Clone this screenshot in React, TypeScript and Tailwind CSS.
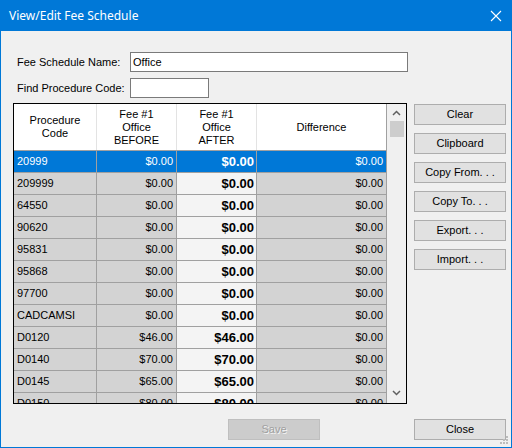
import React from "react";

const rows: [string, string][] = [
  ["20999", "$0.00"],
  ["209999", "$0.00"],
  ["64550", "$0.00"],
  ["90620", "$0.00"],
  ["95831", "$0.00"],
  ["95868", "$0.00"],
  ["97700", "$0.00"],
  ["CADCAMSI", "$0.00"],
  ["D0120", "$46.00"],
  ["D0140", "$70.00"],
  ["D0145", "$65.00"],
  ["D0150", "$80.00"],
];

const buttons = ["Clear", "Clipboard", "Copy From. . .", "Copy To. . .", "Export. . .", "Import. . ."];

function Btn({ label }: { label: string }) {
  return (
    <div className="w-[92px] h-[21px] bg-[#e1e1e1] border border-[#adadad] flex items-center justify-center text-[11px] text-black">
      {label}
    </div>
  );
}

export default function App() {
  return (
    <div
      className="relative w-[512px] h-[448px] bg-[#f0f0f0] flex flex-col border-x border-b border-[#0078d7] text-[11px] text-black overflow-hidden"
      style={{ fontFamily: '"Liberation Sans", Arial, sans-serif' }}
    >
      {/* title bar */}
      <div className="h-[31px] bg-[#0078d7] flex items-center justify-between pl-[8px] pr-[9px] shrink-0">
        <span className="text-white text-[12px]" style={{ fontFamily: '"Noto Sans", sans-serif' }}>
          View/Edit Fee Schedule
        </span>
        <svg width="12" height="12" viewBox="0 0 12 12">
          <path d="M1 1 L11 11 M11 1 L1 11" stroke="#ffffff" strokeWidth="1.1" fill="none" />
        </svg>
      </div>

      <div className="flex flex-col pl-[16px] pt-[21px]">
        <div className="flex items-center h-[20px]">
          <span className="w-[113px]">Fee Schedule Name:</span>
          <div className="w-[278px] h-[20px] bg-white border border-[#7a7a7a] flex items-center pl-[2px]">Office</div>
        </div>
        <div className="flex items-center h-[20px] mt-[6px]">
          <span className="w-[113px]">Find Procedure Code:</span>
          <div className="w-[79px] h-[20px] bg-white border border-[#7a7a7a]"></div>
        </div>
      </div>

      <div className="flex pl-[12px] mt-[5px]">
        {/* grid */}
        <div className="w-[394px] h-[301px] border border-black bg-white flex overflow-hidden">
          <div className="w-[373px] flex flex-col">
            <div className="flex h-[47px] border-b border-[#a0a0a0] shrink-0 leading-[13px] text-center">
              <div className="w-[83px] border-r border-[#e3e3e3] flex items-center justify-center">
                Procedure<br />Code
              </div>
              <div className="w-[80px] border-r border-[#e3e3e3] flex items-center justify-center">
                Fee #1<br />Office<br />BEFORE
              </div>
              <div className="w-[80px] border-r border-[#e3e3e3] flex items-center justify-center">
                Fee #1<br />Office<br />AFTER
              </div>
              <div className="w-[130px] border-r border-[#a0a0a0] flex items-center justify-center">Difference</div>
            </div>
            {rows.map(([code, fee], i) => {
              const sel = i === 0;
              return (
                <div
                  key={code}
                  className={
                    "flex h-[22px] shrink-0 border-b border-[#a0a0a0] " +
                    (sel ? "bg-[#0078d7] text-white" : "bg-[#d3d3d3] text-black")
                  }
                >
                  <div className="w-[83px] border-r border-[#a0a0a0] flex items-center pl-[3px]">{code}</div>
                  <div className="w-[80px] border-r border-[#a0a0a0] flex items-center justify-end pr-[3px]">{fee}</div>
                  <div
                    className={
                      "w-[80px] border-r border-[#a0a0a0] flex items-center justify-end pr-[2px] font-bold text-[13px] " +
                      (sel ? "" : "bg-[#f4f4f4]")
                    }
                  >
                    {fee}
                  </div>
                  <div className="w-[130px] border-r border-[#a0a0a0] flex items-center justify-end pr-[3px]">$0.00</div>
                </div>
              );
            })}
          </div>
          {/* scrollbar */}
          <div className="w-[19px] bg-[#f0f0f0] flex flex-col items-center">
            <div className="h-[16px] w-full flex items-center justify-center mt-[1px]">
              <svg width="9" height="6" viewBox="0 0 9 6">
                <path d="M1 5 L4.5 1.5 L8 5" stroke="#606060" strokeWidth="1.5" fill="none" />
              </svg>
            </div>
            <div className="w-[14px] h-[16px] bg-[#cdcdcd]"></div>
            <div className="flex-1"></div>
            <div className="h-[16px] w-full flex items-center justify-center mb-[2px]">
              <svg width="9" height="6" viewBox="0 0 9 6">
                <path d="M1 1 L4.5 4.5 L8 1" stroke="#606060" strokeWidth="1.5" fill="none" />
              </svg>
            </div>
          </div>
        </div>

        {/* side buttons */}
        <div className="flex flex-col gap-[8px] ml-[7px] mt-[1px]">
          {buttons.map((b) => (
            <Btn key={b} label={b} />
          ))}
        </div>
      </div>

      <div className="flex mt-[15px] pl-[227px]">
        <div
          className="w-[92px] h-[21px] bg-[#cccccc] border border-[#bfbfbf] flex items-center justify-center text-[#a0a0a0]"
          style={{ textShadow: "1px 1px 0 #f5f5f5" }}
        >
          Save
        </div>
        <div className="ml-[94px]">
          <Btn label="Close" />
        </div>
      </div>

      {/* resize grip */}
      <svg className="absolute right-[2px] bottom-[2px]" width="10" height="10" viewBox="0 0 10 10">
        <rect x="7" y="1" width="2" height="2" fill="#bcbcbc" />
        <rect x="4" y="4" width="2" height="2" fill="#bcbcbc" />
        <rect x="7" y="4" width="2" height="2" fill="#bcbcbc" />
        <rect x="1" y="7" width="2" height="2" fill="#bcbcbc" />
        <rect x="4" y="7" width="2" height="2" fill="#bcbcbc" />
        <rect x="7" y="7" width="2" height="2" fill="#bcbcbc" />
      </svg>
    </div>
  );
}
